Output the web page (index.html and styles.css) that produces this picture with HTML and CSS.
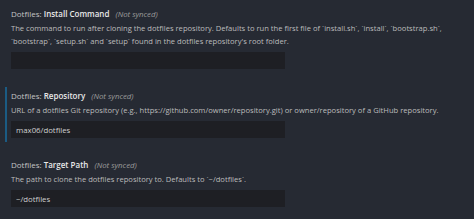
FILE: index.html
```html
<!DOCTYPE html>
<html lang="en">

<head>
    <meta charset="UTF-8">
    <title>Settings - Dotfiles</title>
    <link rel="stylesheet" href="styles.css">
</head>

<body>
    <div class="settings-list">
        <div class="setting">
            <div class="setting-title">
                Dotfiles: <strong>Install Command</strong>
                <span class="sync-state">(Not synced)</span>
            </div>
            <p class="setting-desc">The command to run after cloning the dotfiles repository. Defaults to run the first file of `install.sh`, `install`, `bootstrap.sh`, `bootstrap`, `setup.sh` and `setup` found in the dotfiles repository's root folder.</p>
            <input type="text" class="setting-input" value="">
        </div>

        <div class="setting focused">
            <div class="setting-title">
                Dotfiles: <strong>Repository</strong>
                <span class="sync-state">(Not synced)</span>
            </div>
            <p class="setting-desc">URL of a dotfiles Git repository (e.g., https://github.com/owner/repository.git) or owner/repository of a GitHub repository.</p>
            <input type="text" class="setting-input" value="max06/dotfiles">
        </div>

        <div class="setting">
            <div class="setting-title">
                Dotfiles: <strong>Target Path</strong>
                <span class="sync-state">(Not synced)</span>
            </div>
            <p class="setting-desc">The path to clone the dotfiles repository to. Defaults to `~/dotfiles`.</p>
            <input type="text" class="setting-input" value="~/dotfiles">
        </div>
    </div>
</body>

</html>
```

FILE: styles.css
```css
body {
    margin: 0;
    background-color: #262a33;
    font-family: "Open Sans", "Noto Sans", sans-serif;
    font-size: 7.6px;
    line-height: 13px;
    color: #bcbcbc;
}

.settings-list {
    padding: 5px 0 0 5px;
}

.setting {
    padding: 1.5px 0 4px 4px;
    margin-bottom: 14px;
    border-left: 2px solid transparent;
}

.setting.focused {
    border-left-color: #1b5b83;
}

.setting-title {
    height: 13px;
    overflow: hidden;
    white-space: nowrap;
    color: #c4c4c4;
    font-size: 8px;
}

.setting-title strong {
    color: #e8e8e8;
    font-weight: 600;
}

.sync-state {
    margin-left: 4px;
    font-style: italic;
    color: #9c9c9c;
    font-size: 7.8px;
}

.setting-desc {
    margin: 2px 0 4.5px;
    padding-right: 4px;
}

.setting-input {
    display: block;
    box-sizing: border-box;
    width: 274px;
    height: 17px;
    margin: 0;
    padding: 0 5px;
    border: none;
    outline: none;
    background-color: #1e1f24;
    color: #d0d0d0;
    font-family: inherit;
    font-size: 7.8px;
}
```
